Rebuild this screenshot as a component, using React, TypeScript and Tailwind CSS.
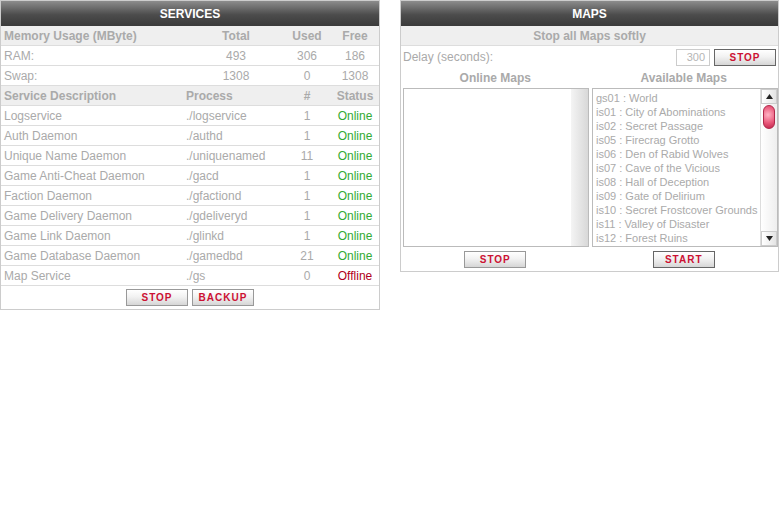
import React from "react";

const font = { fontFamily: '"Liberation Sans", Arial, sans-serif' };

type Service = { name: string; proc: string; count: string; online: boolean };

const services: Service[] = [
  { name: "Logservice", proc: "./logservice", count: "1", online: true },
  { name: "Auth Daemon", proc: "./authd", count: "1", online: true },
  { name: "Unique Name Daemon", proc: "./uniquenamed", count: "11", online: true },
  { name: "Game Anti-Cheat Daemon", proc: "./gacd", count: "1", online: true },
  { name: "Faction Daemon", proc: "./gfactiond", count: "1", online: true },
  { name: "Game Delivery Daemon", proc: "./gdeliveryd", count: "1", online: true },
  { name: "Game Link Daemon", proc: "./glinkd", count: "1", online: true },
  { name: "Game Database Daemon", proc: "./gamedbd", count: "21", online: true },
  { name: "Map Service", proc: "./gs", count: "0", online: false },
];

const maps = [
  "gs01 : World",
  "is01 : City of Abominations",
  "is02 : Secret Passage",
  "is05 : Firecrag Grotto",
  "is06 : Den of Rabid Wolves",
  "is07 : Cave of the Vicious",
  "is08 : Hall of Deception",
  "is09 : Gate of Delirium",
  "is10 : Secret Frostcover Grounds",
  "is11 : Valley of Disaster",
  "is12 : Forest Ruins",
];

function PanelHeader({ title }: { title: string }) {
  return (
    <div className="flex h-[25px] items-center justify-center bg-[linear-gradient(to_bottom,#8c8c8c,#4c4c4c_55%,#3a3a3a)] text-[12px] font-bold text-white">
      {title}
    </div>
  );
}

function Btn({ label, dark }: { label: string; dark?: boolean }) {
  return (
    <button
      className={
        "flex h-[17px] w-[62px] items-center justify-center border bg-[linear-gradient(to_bottom,#ffffff,#f2f2f2_45%,#d6d6d6)] text-[10px] font-bold tracking-[1px] text-[#cc1133] " +
        (dark ? "border-[#666]" : "border-[#999]")
      }
    >
      {label}
    </button>
  );
}

function Services() {
  const memCols = "grid grid-cols-[188px_94px_48px_1fr]";
  const svcCols = "grid grid-cols-[182px_100px_48px_1fr]";
  return (
    <div className="w-[380px] border border-[#cccccc]">
      <PanelHeader title="SERVICES" />
      <div className={memCols + " h-[20px] items-center border-b border-[#dddddd] bg-[#efefef] text-[12px] font-bold text-[#aaaaaa]"}>
        <span className="pl-[3px]">Memory Usage (MByte)</span>
        <span className="text-center">Total</span>
        <span className="text-center">Used</span>
        <span className="text-center">Free</span>
      </div>
      {[
        ["RAM:", "493", "306", "186"],
        ["Swap:", "1308", "0", "1308"],
      ].map((r) => (
        <div key={r[0]} className={memCols + " h-[20px] items-center border-b border-[#dddddd] text-[12px] text-[#aaaaaa]"}>
          <span className="pl-[3px]">{r[0]}</span>
          <span className="text-center">{r[1]}</span>
          <span className="text-center">{r[2]}</span>
          <span className="text-center">{r[3]}</span>
        </div>
      ))}
      <div className={svcCols + " h-[20px] items-center border-b border-[#dddddd] bg-[#efefef] text-[12px] font-bold text-[#aaaaaa]"}>
        <span className="pl-[3px]">Service Description</span>
        <span className="pl-[3px]">Process</span>
        <span className="text-center">#</span>
        <span className="text-center">Status</span>
      </div>
      {services.map((s) => (
        <div key={s.name} className={svcCols + " h-[20px] items-center border-b border-[#dddddd] text-[12px] text-[#aaaaaa]"}>
          <span className="pl-[3px]">{s.name}</span>
          <span className="pl-[3px]">{s.proc}</span>
          <span className="text-center">{s.count}</span>
          <span className={"text-center " + (s.online ? "text-[#33aa33]" : "text-[#b00020]")}>
            {s.online ? "Online" : "Offline"}
          </span>
        </div>
      ))}
      <div className="flex h-[23px] items-center justify-center gap-[4px]">
        <Btn label="STOP" />
        <Btn label="BACKUP" />
      </div>
    </div>
  );
}

function Arrow({ up }: { up?: boolean }) {
  return (
    <div className="flex h-[15px] items-center justify-center border border-[#cccccc] bg-[linear-gradient(to_right,#ffffff,#e4e4e4)]">
      <svg width="7" height="5" viewBox="0 0 7 5">
        <path d={up ? "M0 5 L3.5 0 L7 5 Z" : "M0 0 L3.5 5 L7 0 Z"} fill="#222" />
      </svg>
    </div>
  );
}

function Maps() {
  return (
    <div className="w-[379px] border border-[#cccccc]">
      <PanelHeader title="MAPS" />
      <div className="flex h-[20px] items-center justify-center border-b border-[#dddddd] bg-[#efefef] text-[12px] font-bold text-[#aaaaaa]">
        Stop all Maps softly
      </div>
      <div className="flex h-[22px] items-center pl-[2px] pr-[2px] text-[12px] text-[#aaaaaa]">
        <span className="flex-1">Delay (seconds):</span>
        <div className="mr-[4px] flex h-[17px] w-[34px] items-center justify-end border border-[#cccccc] pr-[4px] text-[11px] text-[#b5b5b5]">
          300
        </div>
        <Btn label="STOP" dark />
      </div>
      <div className="grid h-[20px] grid-cols-2 items-center text-[12px] font-bold text-[#aaaaaa]">
        <span className="text-center">Online Maps</span>
        <span className="text-center">Available Maps</span>
      </div>
      <div className="grid grid-cols-[186px_186px] gap-[3px] px-[2px]">
        <div className="flex h-[159px] border border-[#bbbbbb]">
          <div className="flex-1 bg-white" />
          <div className="w-[17px] bg-[linear-gradient(to_right,#f4f4f4,#d8d8d8)]" />
        </div>
        <div className="flex h-[159px] border border-[#bbbbbb]">
          <div className="flex-1 overflow-hidden pl-[3px] pt-[2px] text-[11px] leading-[14px] text-[#aaaaaa]">
            {maps.map((m) => (
              <div key={m} className="whitespace-nowrap">
                {m}
              </div>
            ))}
          </div>
          <div className="flex w-[17px] flex-col border-l border-[#dddddd] bg-[linear-gradient(to_right,#ffffff,#eeeeee)]">
            <Arrow up />
            <div className="flex-1 px-[2px] pt-[1px]">
              <div className="h-[24px] rounded-full border border-[#b0284a] bg-[radial-gradient(circle_at_40%_40%,#ffb3c4,#ea5a7c_55%,#c0244a)]" />
            </div>
            <Arrow />
          </div>
        </div>
      </div>
      <div className="grid h-[24px] grid-cols-2 items-center">
        <div className="flex justify-center">
          <Btn label="STOP" />
        </div>
        <div className="flex justify-center">
          <Btn label="START" dark />
        </div>
      </div>
    </div>
  );
}

export default function App() {
  return (
    <div className="flex h-[512px] w-[779px] items-start gap-[20px] bg-white" style={font}>
      <Services />
      <Maps />
    </div>
  );
}
